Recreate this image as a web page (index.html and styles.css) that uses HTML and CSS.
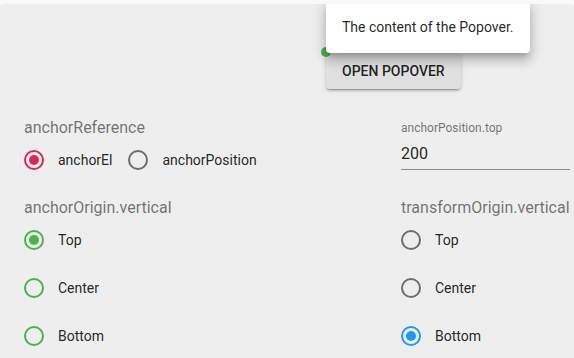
FILE: index.html
```html
<!DOCTYPE html>
<html>
<head>
    <meta charset="utf-8">
    <title>Popover Playground</title>
    <link rel="stylesheet" href="styles.css">
</head>
<body>
    <div class="demo">
        <div class="trigger">
            <div class="anchor">
                <span class="anchor-dot"></span>
                <button type="button" class="open-button">Open Popover</button>
                <div class="popover">The content of the Popover.</div>
            </div>
        </div>

        <div class="controls">
            <div class="row">
                <div class="col-left">
                    <div class="group-label">anchorReference</div>
                    <div class="radio-row">
                        <label class="radio-option">
                            <span class="radio-btn"><span class="radio-icon pink checked"></span></span>
                            <span class="radio-text">anchorEl</span>
                        </label>
                        <label class="radio-option">
                            <span class="radio-btn"><span class="radio-icon"></span></span>
                            <span class="radio-text">anchorPosition</span>
                        </label>
                    </div>
                </div>
                <div class="col-right">
                    <div class="field">
                        <div class="field-label">anchorPosition.top</div>
                        <div class="field-input">200</div>
                    </div>
                </div>
            </div>

            <div class="row second">
                <div class="col-left">
                    <div class="group-label">anchorOrigin.vertical</div>
                    <label class="radio-option">
                        <span class="radio-btn"><span class="radio-icon green checked"></span></span>
                        <span class="radio-text">Top</span>
                    </label>
                    <label class="radio-option">
                        <span class="radio-btn"><span class="radio-icon green"></span></span>
                        <span class="radio-text">Center</span>
                    </label>
                    <label class="radio-option">
                        <span class="radio-btn"><span class="radio-icon green"></span></span>
                        <span class="radio-text">Bottom</span>
                    </label>
                </div>
                <div class="col-right">
                    <div class="group-label">transformOrigin.vertical</div>
                    <label class="radio-option">
                        <span class="radio-btn"><span class="radio-icon"></span></span>
                        <span class="radio-text">Top</span>
                    </label>
                    <label class="radio-option">
                        <span class="radio-btn"><span class="radio-icon"></span></span>
                        <span class="radio-text">Center</span>
                    </label>
                    <label class="radio-option">
                        <span class="radio-btn"><span class="radio-icon blue checked"></span></span>
                        <span class="radio-text">Bottom</span>
                    </label>
                </div>
            </div>
        </div>
    </div>
</body>
</html>
```

FILE: styles.css
```css
body {
    margin: 0;
    background-color: #fafafa;
    font-family: Roboto, "Liberation Sans", sans-serif;
    color: rgba(0, 0, 0, 0.87);
    overflow: hidden;
}

.demo {
    margin-top: 4px;
    height: 354px;
    overflow: hidden;
    background-color: #eeeeee;
    border-radius: 4px 4px 0 0;
    box-shadow: 0 1px 3px rgba(0, 0, 0, 0.08);
}

.trigger {
    padding: 49px 0 0 326px;
}

.anchor {
    position: relative;
    display: inline-block;
    vertical-align: top;
}

.anchor-dot {
    position: absolute;
    left: -5px;
    top: -6px;
    width: 10px;
    height: 10px;
    border-radius: 50%;
    background-color: #4caf50;
}

.open-button {
    display: block;
    height: 36px;
    padding: 0 16px;
    border: none;
    border-radius: 4px;
    background-color: #e0e0e0;
    font-family: inherit;
    font-size: 14px;
    font-weight: 500;
    text-transform: uppercase;
    color: rgba(0, 0, 0, 0.87);
    box-shadow: 0 3px 1px -2px rgba(0, 0, 0, 0.2), 0 2px 2px 0 rgba(0, 0, 0, 0.14), 0 1px 5px 0 rgba(0, 0, 0, 0.12);
    cursor: pointer;
}

.popover {
    position: absolute;
    left: 0;
    bottom: 100%;
    padding: 16px;
    white-space: nowrap;
    font-size: 14px;
    line-height: 20px;
    background-color: #fff;
    border-radius: 4px;
    box-shadow: 0 5px 5px -3px rgba(0, 0, 0, 0.2), 0 8px 10px 1px rgba(0, 0, 0, 0.14), 0 3px 14px 2px rgba(0, 0, 0, 0.12);
}

.controls {
    padding: 31px 0 0 24px;
}

.row {
    display: flex;
}

.row.second {
    margin-top: 16px;
}

.col-left {
    width: 377px;
}

.col-right {
    width: 169px;
}

.group-label {
    font-size: 16px;
    line-height: 16px;
    color: rgba(0, 0, 0, 0.54);
}

.radio-row {
    display: flex;
}

.radio-option {
    display: flex;
    align-items: center;
    height: 48px;
    margin-left: -14px;
    margin-right: 16px;
    font-size: 14px;
    cursor: pointer;
}

.radio-btn {
    display: flex;
    align-items: center;
    justify-content: center;
    width: 48px;
    height: 48px;
}

.radio-icon {
    position: relative;
    box-sizing: border-box;
    width: 20px;
    height: 20px;
    border: 2px solid rgba(0, 0, 0, 0.54);
    border-radius: 50%;
}

.radio-icon.checked::after {
    content: "";
    position: absolute;
    left: 3px;
    top: 3px;
    width: 10px;
    height: 10px;
    border-radius: 50%;
    background-color: currentColor;
}

.radio-icon.pink {
    color: #d6285a;
    border-color: #d6285a;
}

.radio-icon.green {
    color: #4caf50;
    border-color: #4caf50;
}

.radio-icon.blue {
    color: #2196f3;
    border-color: #2196f3;
}

.field {
    padding-top: 2px;
}

.field-label {
    font-size: 12px;
    line-height: 12px;
    color: rgba(0, 0, 0, 0.54);
}

.field-input {
    margin-top: 4px;
    padding: 6px 0 6px;
    font-size: 16px;
    line-height: 19px;
    border-bottom: 1px solid rgba(0, 0, 0, 0.42);
}
```
